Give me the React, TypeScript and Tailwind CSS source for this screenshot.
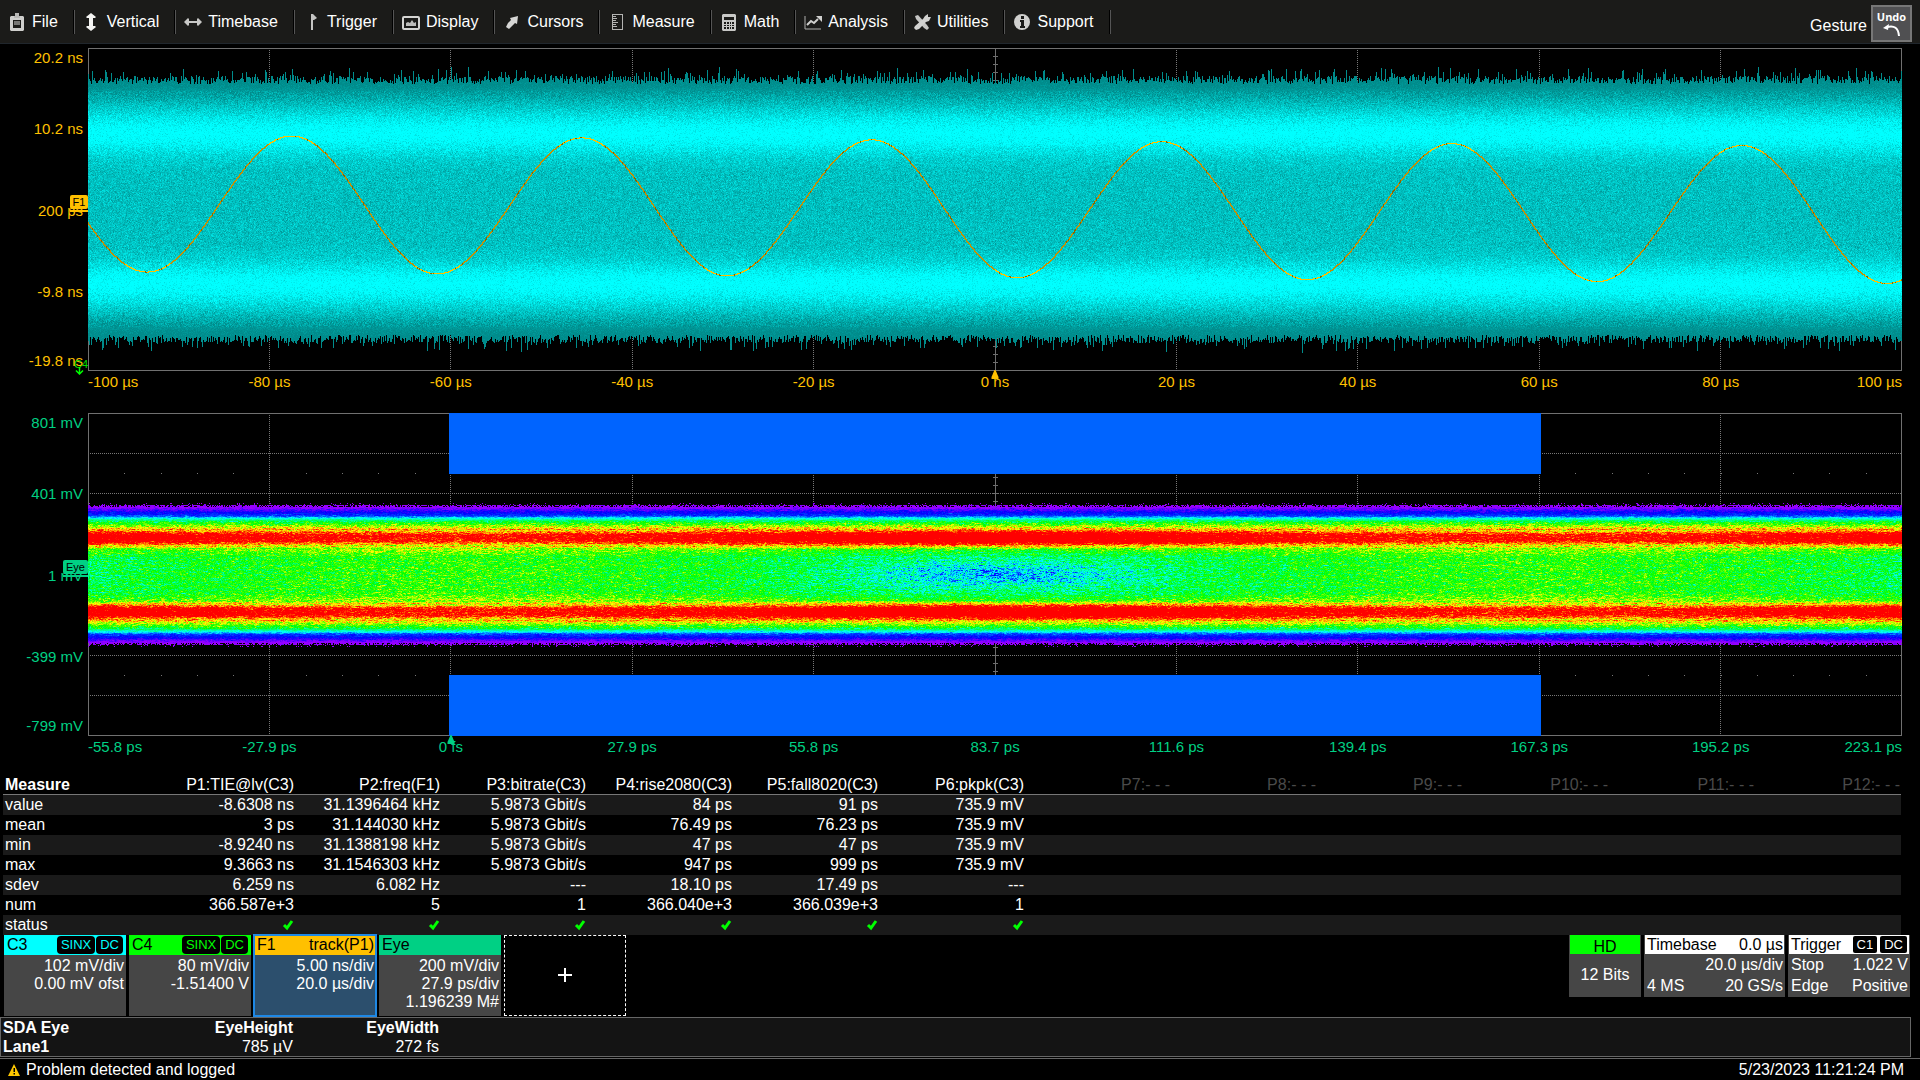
import { useEffect, useRef } from 'react'
import type { ReactNode } from 'react'

const menuItems: { label: string; icon: ReactNode }[] = [
  {
    label: 'File',
    icon: (
      <>
        <path d="M6 3h1V0h4v3h1v2H6z" fill="#b8b8b6" />
        <path fillRule="evenodd" d="M2 4l1-1h3v2h6V3h3l1 1v13l-1 1H3l-1-1zM5 7v8h8V7z" fill="#cfcfcd" />
        <path d="M6 8h6v4H6z" fill="#777775" />
      </>
    ),
  },
  {
    label: 'Vertical',
    icon: <path d="M8 0l5 4-1 1h-2v8h2l1 1-5 4-5-4 1-1h2V5H4L3 4z" fill="#f4f4f2" />,
  },
  {
    label: 'Timebase',
    icon: <path d="M0 9l4-4 1 1v2h8V6l1-1 4 4-4 4-1-1v-2H5v2l-1 1z" fill="#c8c8c6" />,
  },
  {
    label: 'Trigger',
    icon: <path d="M8 1h2l4 4-3 2h-1v10H8z" fill="#c4c4c2" />,
  },
  {
    label: 'Display',
    icon: (
      <>
        <rect x="1" y="4" width="16" height="12" rx="1" fill="none" stroke="#d4d4d2" strokeWidth="2" />
        <path d="M4 13v-3l2-1 2 1 2-3 2 3 2-1v4z" fill="#bdbdbb" />
      </>
    ),
  },
  {
    label: 'Cursors',
    icon: <path d="M15 3l-1 8-2-1-6 6-3-2 2-4 3-3-1-2z" fill="#d6d6d4" />,
  },
  {
    label: 'Measure',
    icon: (
      <>
        <path fillRule="evenodd" d="M4 1h11v16H4zM5 2v14h9V2z" fill="#b4b4b2" />
        <path d="M5 3h3v1H5zM5 5h4v1H5zM5 7h3v1H5zM5 9h5v1H5zM5 11h3v1H5zM5 13h4v1H5z" fill="#b4b4b2" />
      </>
    ),
  },
  {
    label: 'Math',
    icon: (
      <path
        fillRule="evenodd"
        d="M2 2l1-1h12l1 1v15l-1 1H3l-1-1zM4 4v3h10V4zM4 9v2h2V9zM7 9v2h2V9zM10 9v2h1V9zM12 9v2h2V9zM4 12v1h2v-1zM7 12v1h2v-1zM10 12v1h1v-1zM12 12v1h2v-1zM4 14v2h2v-2zM7 14v2h2v-2zM10 14v2h1v-2zM12 14v2h2v-2z"
        fill="#c8c8c6"
      />
    ),
  },
  {
    label: 'Analysis',
    icon: (
      <>
        <path d="M1 3v13h16" fill="none" stroke="#b0b0ae" />
        <path d="M3 12l4-4 3 2 4-4" fill="none" stroke="#d0d0ce" strokeWidth="2" />
        <path d="M12 3h6v6z" fill="#d0d0ce" />
      </>
    ),
  },
  {
    label: 'Utilities',
    icon: (
      <>
        <path d="M2 3l3-1 9 10 2 3-2 2-3-2L3 6z" fill="#c6c6c4" />
        <path d="M12 3l3-2v3h3l-2 4-3 1-7 7-3 1-2-2 1-2 8-7z" fill="#d2d2d0" />
      </>
    ),
  },
  {
    label: 'Support',
    icon: (
      <>
        <circle cx="9" cy="9" r="8" fill="#d0d0ce" />
        <path d="M8 3h3v3H8zM7 7h4v6h1v2H7v-2h1V9H7z" fill="#1b1b19" />
      </>
    ),
  },
]

const measureHeads = [
  'P1:TIE@lv(C3)',
  'P2:freq(F1)',
  'P3:bitrate(C3)',
  'P4:rise2080(C3)',
  'P5:fall8020(C3)',
  'P6:pkpk(C3)',
  'P7:- - -',
  'P8:- - -',
  'P9:- - -',
  'P10:- - -',
  'P11:- - -',
  'P12:- - -',
]

const measureRows = [
  { name: 'value', cells: ['-8.6308 ns', '31.1396464 kHz', '5.9873 Gbit/s', '84 ps', '91 ps', '735.9 mV'] },
  { name: 'mean', cells: ['3 ps', '31.144030 kHz', '5.9873 Gbit/s', '76.49 ps', '76.23 ps', '735.9 mV'] },
  { name: 'min', cells: ['-8.9240 ns', '31.1388198 kHz', '5.9873 Gbit/s', '47 ps', '47 ps', '735.9 mV'] },
  { name: 'max', cells: ['9.3663 ns', '31.1546303 kHz', '5.9873 Gbit/s', '947 ps', '999 ps', '735.9 mV'] },
  { name: 'sdev', cells: ['6.259 ns', '6.082 Hz', '---', '18.10 ps', '17.49 ps', '---'] },
  { name: 'num', cells: ['366.587e+3', '5', '1', '366.040e+3', '366.039e+3', '1'] },
]

// Small seeded generator so the traces look the same on every load
function makeRandom(seed: number) {
  let s = seed
  return () => {
    s = (s + 0x6d2b79f5) | 0
    let t = Math.imul(s ^ (s >>> 15), 1 | s)
    t = (t + Math.imul(t ^ (t >>> 7), 61 | t)) ^ t
    return ((t ^ (t >>> 14)) >>> 0) / 4294967296
  }
}

function lerp(points: number[][], x: number) {
  if (x <= points[0][0]) return points[0].slice(1)
  for (let i = 1; i < points.length; i++) {
    if (x <= points[i][0]) {
      const a = points[i - 1]
      const b = points[i]
      const t = (x - a[0]) / (b[0] - a[0])
      return a.slice(1).map((v, k) => v + (b[k + 1] - v) * t)
    }
  }
  return points[points.length - 1].slice(1)
}

// distance from the centre line -> brightness
const trackProfile = [
  [0, 190], [38, 194], [50, 208], [60, 232], [67, 252], [75, 264], [82, 254], [92, 228], [102, 198], [112, 168], [122, 144], [132, 134],
]

function drawTrack(ctx: CanvasRenderingContext2D, w: number, h: number) {
  const rnd = makeRandom(7)
  const img = ctx.createImageData(w, h)
  const scale = 323 / h
  const mid = h / 2 - 1
  for (let x = 0; x < w; x++) {
    const spike = () => (rnd() < 0.2 ? rnd() * 10 : 0)
    const top = 125 + rnd() * 8 + spike()
    const bottom = 126 + rnd() * 8 + spike()
    for (let y = 0; y < h; y++) {
      const d = (y - mid) * scale
      if (d < 0 ? -d > top : d > bottom) continue
      const ad = Math.abs(d)
      const noise = (rnd() + rnd() + rnd() - 1.5) * (ad > 118 ? 14 : 34)
      const v = Math.max(139, Math.min(255, lerp(trackProfile, ad)[0] + noise))
      const i = (y * w + x) * 4
      img.data[i + 1] = v
      img.data[i + 2] = v
      img.data[i + 3] = 255
    }
  }
  ctx.putImageData(img, 0, 0)

  // F1 track
  const curve = (x: number) => {
    const u = (x / w) * 1814
    return (156 + ((u - 204) * 9.5) / 1450 - 68.5 * Math.cos((2 * Math.PI * (u - 204)) / 290)) / scale
  }
  for (let x = 0; x < w; x++) {
    const a = Math.round(curve(x))
    const b = Math.round(curve(x + 1))
    const steep = Math.abs(curve(x + 1) - curve(x)) > 0.7
    const r = rnd()
    ctx.fillStyle = r < 0.15 ? '#8a6400' : steep ? '#c88f00' : '#ffc000'
    ctx.fillRect(x, Math.min(a, b), 1, Math.abs(b - a) + 1)
  }
}

const eyeProfile = [
  [24, 0.5], [26, 0.58], [28, 0.7], [31, 0.88], [34, 1.02], [40, 1.02], [43, 0.9], [46, 0.74], [50, 0.6], [54, 0.46], [57, 0.34], [59, 0.24], [63, 0.16], [68, 0.03],
]

const eyeColors = [
  [0, 160, 0, 255], [0.06, 140, 0, 255], [0.17, 0, 0, 255], [0.24, 0, 60, 255], [0.34, 0, 255, 255], [0.42, 0, 255, 140], [0.52, 0, 255, 0], [0.6, 90, 255, 0], [0.7, 255, 255, 0], [0.78, 255, 150, 0], [0.86, 255, 40, 0], [0.9, 255, 0, 0],
]

function drawEye(ctx: CanvasRenderingContext2D, w: number, h: number) {
  const rnd = makeRandom(23)
  const img = ctx.createImageData(w, h)
  const scale = 323 / h
  const mid = h / 2
  for (let y = 0; y < h; y++) {
    const d = Math.abs((y - mid) * scale)
    if (d > 72) continue
    const base = lerp(eyeProfile, d)[0]
    let n = 0
    for (let x = 0; x < w; x++) {
      n = n * 0.5 + (rnd() + rnd() + rnd() - 1.5) * 0.1
      if (d > 68 && rnd() < (d > 70 ? 0.93 : 0.35)) continue
      const open = (1 + Math.cos((2 * Math.PI * (x - w / 2)) / (w * 0.6))) / 2
      let v = base
      if (d < 26) {
        const centre = 0.55 - 0.1 * open - 0.15 * Math.pow(open, 6) * Math.exp(-(d * d) / 160)
        v = centre + Math.max(0, d - 18) * 0.012
      } else if (d > 29 && d < 45) {
        v = base - (1 - open) * 0.12
      }
      const c = lerp(eyeColors, v + n * (d > 54 ? 0.4 : 1))
      const i = (y * w + x) * 4
      img.data[i] = c[0]
      img.data[i + 1] = c[1]
      img.data[i + 2] = c[2]
      img.data[i + 3] = 255
    }
  }
  ctx.putImageData(img, 0, 0)
}

type Draw = (ctx: CanvasRenderingContext2D, w: number, h: number) => void

function Trace({ draw, label }: { draw: Draw; label: string }) {
  const ref = useRef<HTMLCanvasElement>(null)

  useEffect(() => {
    const canvas = ref.current
    const ctx = canvas?.getContext('2d')
    if (!canvas || !ctx) return
    const render = () => {
      const w = canvas.clientWidth
      const h = canvas.clientHeight
      if (!w || !h) return
      canvas.width = w
      canvas.height = h
      draw(ctx, w, h)
    }
    render()
    window.addEventListener('resize', render)
    return () => window.removeEventListener('resize', render)
  }, [draw])

  return <canvas ref={ref} role="img" aria-label={label} className="absolute inset-0 w-full h-full" />
}

const columns = [10, 20, 30, 40, 60, 70, 80, 90]
const rows = [12.5, 25, 75, 87.5]

function Grid({ mask }: { mask?: boolean }) {
  return (
    <svg className="absolute inset-0 w-full h-full" shapeRendering="crispEdges" aria-hidden="true">
      {columns.map((x) => (
        <line key={x} x1={`${x}%`} x2={`${x}%`} y1="2" y2="100%" stroke="#777" strokeDasharray="1 1" />
      ))}
      {rows.map((y) => (
        <line key={y} x1="2" x2="100%" y1={`${y}%`} y2={`${y}%`} stroke="#777" strokeDasharray="1 1" />
      ))}
      {Array.from({ length: 49 }, (_, i) => (
        <g key={i} fill="#777">
          <rect x={`${(i + 1) * 2}%`} y="18.5%" width="1" height="1" />
          <rect x={`${(i + 1) * 2}%`} y="81.25%" width="1" height="1" />
        </g>
      ))}
      <svg x="50%" overflow="visible">
        <line x1="0.5" x2="0.5" y1="0" y2="100%" stroke="#6e6e6e" />
        {Array.from({ length: 39 }, (_, i) => (
          <line key={i} x1="-2" x2="3" y1={`${(i + 1) * 2.5}%`} y2={`${(i + 1) * 2.5}%`} stroke="#6e6e6e" />
        ))}
      </svg>
      {mask && (
        <g fill="#0064ff">
          <rect x="19.9%" y="0" width="60.2%" height="18.75%" />
          <rect x="19.9%" y="81.2%" width="60.2%" height="18.8%" />
        </g>
      )}
    </svg>
  )
}

function YAxis({ labels, children }: { labels: string[]; children: ReactNode }) {
  return (
    <div className="relative w-[88px] shrink-0 flex flex-col pr-[5px] text-right leading-5">
      {labels.map((label, i) => (
        <div
          key={label}
          className={
            i === 0
              ? 'flex-1 basis-0'
              : i === labels.length - 1
                ? 'flex-1 basis-0 flex items-end justify-end'
                : 'flex-[2] basis-0 flex items-center justify-end pt-0.5'
          }
        >
          {label}
        </div>
      ))}
      {children}
    </div>
  )
}

function XAxis({ labels }: { labels: string[] }) {
  return (
    <div className="ml-[88px] mr-[18px] flex leading-[22px]">
      {labels.map((label, i) => (
        <div
          key={label}
          className={
            i === 0
              ? 'flex-1 basis-0 whitespace-nowrap'
              : i === labels.length - 1
                ? 'flex-1 basis-0 flex justify-end whitespace-nowrap'
                : 'flex-[2] basis-0 text-center'
          }
        >
          {label}
        </div>
      ))}
    </div>
  )
}

function Tick() {
  return (
    <svg className="block ml-auto w-3 h-3" viewBox="0 0 12 12" role="img" aria-label="ok">
      <path d="M2 6l3 3 5-7" fill="none" stroke="#00ff00" strokeWidth="3" />
    </svg>
  )
}

export default function App() {
  return (
    <div
      className="min-h-screen flex flex-col bg-black text-white text-base"
      style={{ fontFamily: '"Liberation Sans", Arial, sans-serif' }}
    >
      {/* Menu bar */}
      <header className="h-11 shrink-0 flex items-center justify-between bg-[#1b1b19] border-b border-[#20262c]">
        <nav className="flex items-center">
          {menuItems.map((item) => (
            <div key={item.label} className="flex items-center">
              <button className="flex items-center gap-1.5 pl-2 pr-[15px] h-6">
                <svg className="w-[18px] h-[18px]" viewBox="0 0 18 18" aria-hidden="true">
                  {item.icon}
                </svg>
                {item.label}
              </button>
              <span className="h-6 border-l border-l-black border-r border-r-[#555]" />
            </div>
          ))}
        </nav>
        <div className="flex items-center gap-1 pr-2 pt-1">
          <span className="pt-1">Gesture</span>
          <button
            aria-label="Undo"
            className="w-[41px] h-[37px] flex flex-col items-center pt-1 border-2 border-[#777] bg-[#505052] text-[11px] leading-3 font-bold"
            style={{ fontFamily: '"Open Sans", sans-serif' }}
          >
            Undo
            <svg className="w-5 h-4" viewBox="0 0 20 16" aria-hidden="true">
              <path d="M5 4q11-3 12 9" fill="none" stroke="#fff" strokeWidth="2" />
              <path d="M1 5l6-4-1 6z" fill="#fff" />
            </svg>
          </button>
        </div>
      </header>

      {/* Track of TIE */}
      <section className="flex-1 flex flex-col pt-1 text-[15px] text-[#ffc000]">
        <div className="flex-1 flex min-h-48">
          <YAxis labels={['20.2 ns', '10.2 ns', '200 ps', '-9.8 ns', '-19.8 ns']}>
            <span className="absolute right-0 top-1/2 -translate-y-[15px] w-[18px] h-[17px] border-b-2 border-[#ffc000]">
              <span className="block h-[14px] rounded-xs bg-[#ffc000] text-black text-[11px] leading-[15px] text-center">F1</span>
            </span>
            <span className="absolute right-0 bottom-0 text-[#00e000] text-[11px] leading-[14px]">C4</span>
            <svg className="absolute right-1 -bottom-1 w-[9px] h-2" viewBox="0 0 9 8" aria-hidden="true">
              <path d="M4.500 0v7M1 3.500l3.500 3.500 3.500-3.500" fill="none" stroke="#00ff00" strokeWidth="1.500" />
            </svg>
          </YAxis>
          <div className="relative flex-1 mr-[18px] border border-[#707070]">
            <div className="absolute -inset-px">
              <Grid />
              <Trace draw={drawTrack} label="TIE track" />
            </div>
            <svg className="absolute left-1/2 top-full -translate-x-1/2 w-[9px] h-[10px]" viewBox="0 0 9 10" aria-hidden="true">
              <path d="M4 0h1l3 7v2H1V7z" fill="#ffc000" />
            </svg>
          </div>
        </div>
        <div className="h-[42px]">
          <XAxis labels={['-100 µs', '-80 µs', '-60 µs', '-40 µs', '-20 µs', '0 ns', '20 µs', '40 µs', '60 µs', '80 µs', '100 µs']} />
        </div>
      </section>

      {/* Eye diagram */}
      <section className="flex-1 flex flex-col text-[15px] text-[#00d084]">
        <div className="flex-1 flex min-h-48">
          <YAxis labels={['801 mV', '401 mV', '1 mV', '-399 mV', '-799 mV']}>
            <span className="absolute right-0 top-1/2 -translate-y-[15px] w-[25px] h-[17px] border-b-2 border-[#00d084]">
              <span className="block h-[14px] rounded-xs bg-[#00d084] text-black text-[11px] leading-[15px] text-center">Eye</span>
            </span>
          </YAxis>
          <div className="relative flex-1 mr-[18px] border border-[#707070]">
            <div className="absolute -inset-px">
              <Grid mask />
              <Trace draw={drawEye} label="Eye diagram" />
            </div>
            <svg className="absolute left-[20%] top-full -translate-x-1/2 w-[9px] h-[10px]" viewBox="0 0 9 10" aria-hidden="true">
              <path d="M4 0h1l3 7v2H1V7z" fill="#00d084" />
            </svg>
          </div>
        </div>
        <div className="h-[38px]">
          <XAxis
            labels={['-55.8 ps', '-27.9 ps', '0 fs', '27.9 ps', '55.8 ps', '83.7 ps', '111.6 ps', '139.4 ps', '167.3 ps', '195.2 ps', '223.1 ps']}
          />
        </div>
      </section>

      {/* Measure table */}
      <div className="pl-[3px] pr-[19px]">
        <table className="w-full table-fixed border-separate border-spacing-0 leading-5 text-right">
          <thead>
            <tr className="h-[21px]">
              <th className="p-0 pt-px pl-0.5 text-left leading-[19px] font-bold border-b border-[#777]">Measure</th>
              {measureHeads.map((head, i) => (
                <th
                  key={head}
                  className={`p-0 pt-px pr-px leading-[19px] font-normal whitespace-nowrap border-b border-[#777] ${i > 5 ? 'text-[#4a4a4a]' : ''}`}
                >
                  {head}
                </th>
              ))}
            </tr>
          </thead>
          <tbody>
            {measureRows.map((row) => (
              <tr key={row.name} className="h-5 odd:bg-[#1a1a1a]">
                <th className="p-0 pl-0.5 text-left font-normal">{row.name}</th>
                {measureHeads.map((head, i) => (
                  <td key={head} className="p-0 pr-px">{row.cells[i]}</td>
                ))}
              </tr>
            ))}
            <tr className="h-5 bg-[#1a1a1a]">
              <th className="p-0 pl-0.5 text-left font-normal">status</th>
              {measureHeads.map((head, i) => (
                <td key={head} className="p-0 pr-px">{i < 6 && <Tick />}</td>
              ))}
            </tr>
          </tbody>
        </table>
      </div>

      {/* Descriptor boxes */}
      <div className="h-[82px] shrink-0 flex justify-between items-start pl-1 pr-2.5 leading-[18px]">
        <div className="flex gap-[3px] text-right">
          <div className="w-[122px] h-[81px] bg-[#464646]">
            <div className="h-5 flex items-center justify-between px-[3px] bg-[#00ffff] text-black">
              C3
              <span className="flex gap-px text-[13px] text-[#00ffff]">
                <span className="px-1 rounded-sm bg-black">SINX</span>
                <span className="px-1 rounded-sm bg-black">DC</span>
              </span>
            </div>
            <div className="pt-0.5 pr-0.5">102 mV/div</div>
            <div className="pr-0.5">0.00 mV ofst</div>
          </div>
          <div className="w-[122px] h-[81px] bg-[#464646]">
            <div className="h-5 flex items-center justify-between px-[3px] bg-[#00ff00] text-black">
              C4
              <span className="flex gap-px text-[13px] text-[#00ff00]">
                <span className="px-1 rounded-sm bg-black">SINX</span>
                <span className="px-1 rounded-sm bg-black">DC</span>
              </span>
            </div>
            <div className="pt-0.5 pr-0.5">80 mV/div</div>
            <div className="pr-0.5">-1.51400 V</div>
          </div>
          <div className="w-[122px] h-[81px] bg-[#2c4f6d] outline-2 -outline-offset-1 outline-[#1e88e5]">
            <div className="h-5 flex items-center justify-between pl-[3px] pr-0.5 bg-[#ffc000] text-black">
              F1
              <span>track(P1)</span>
            </div>
            <div className="pt-0.5 pr-0.5">5.00 ns/div</div>
            <div className="pr-0.5">20.0 µs/div</div>
          </div>
          <div className="w-[122px] h-[81px] bg-[#464646]">
            <div className="h-5 flex items-center pl-[3px] bg-[#00d084] text-black">Eye</div>
            <div className="pt-0.5 pr-0.5">200 mV/div</div>
            <div className="pr-0.5">27.9 ps/div</div>
            <div className="pr-0.5">1.196239 M#</div>
          </div>
          <button aria-label="Add" className="w-[122px] h-[81px] flex items-center justify-center border border-dashed border-white">
            <svg className="w-[15px] h-[15px]" viewBox="0 0 15 15" aria-hidden="true">
              <path d="M6 0h2v6h6v2H8v6H6V8H0V6h6z" fill="#fff" />
            </svg>
          </button>
        </div>

        <div className="flex gap-[3px] leading-[21px]">
          <div className="w-[72px] h-[62px] bg-[#464646] text-center">
            <div className="mx-px h-[19px] bg-[#00ff00] text-black leading-[23px]">HD</div>
            <div className="pt-2.5">12 Bits</div>
          </div>
          <div className="w-[141px] h-[62px] bg-[#464646]">
            <div className="mx-px h-[19px] pl-0.5 pr-px flex items-center justify-between bg-white text-black">
              <span>Timebase</span>
              <span>0.0 µs</span>
            </div>
            <div className="pt-px pr-0.5 text-right leading-5">20.0 µs/div</div>
            <div className="pl-[3px] pr-0.5 flex justify-between">
              <span>4 MS</span>
              <span>20 GS/s</span>
            </div>
          </div>
          <div className="w-[122px] h-[62px] bg-[#464646]">
            <div className="mx-px h-[19px] pl-0.5 pr-0.5 flex items-center justify-between bg-white text-black">
              Trigger
              <span className="flex gap-[3px] text-[13px] leading-[17px] text-white">
                <span className="px-1 rounded-xs bg-black">C1</span>
                <span className="px-1 rounded-xs bg-black">DC</span>
              </span>
            </div>
            <div className="pt-px pl-[3px] pr-0.5 flex justify-between leading-5">
              <span>Stop</span>
              <span>1.022 V</span>
            </div>
            <div className="pl-[3px] pr-0.5 flex justify-between">
              <span>Edge</span>
              <span>Positive</span>
            </div>
          </div>
        </div>
      </div>

      {/* SDA results */}
      <div className="mr-[9px] border border-[#666] bg-[#141414]">
        <table className="table-fixed border-separate border-spacing-0 text-right leading-[19px]">
          <thead>
            <tr>
              <th className="w-[146px] p-0 pl-0.5 text-left">SDA Eye</th>
              <th className="w-[146px] p-0">EyeHeight</th>
              <th className="w-[146px] p-0">EyeWidth</th>
            </tr>
          </thead>
          <tbody>
            <tr>
              <th className="p-0 pl-0.5 text-left">Lane1</th>
              <td className="p-0">785 µV</td>
              <td className="p-0">272 fs</td>
            </tr>
          </tbody>
        </table>
      </div>

      {/* Status bar */}
      <footer className="mt-px flex justify-between border-t border-[#666] pl-2 pr-4 leading-[21px]">
        <div className="flex items-center gap-1.5">
          <svg className="w-3 h-3" viewBox="0 0 12 12" aria-hidden="true">
            <path d="M6 0l6 12H0z" fill="#ffc800" />
            <path d="M5.500 4h1.500v4H5.500zM5.500 9h1.500v1.500H5.500z" fill="#000" />
          </svg>
          Problem detected and logged
        </div>
        <time>5/23/2023 11:21:24 PM</time>
      </footer>
    </div>
  )
}
